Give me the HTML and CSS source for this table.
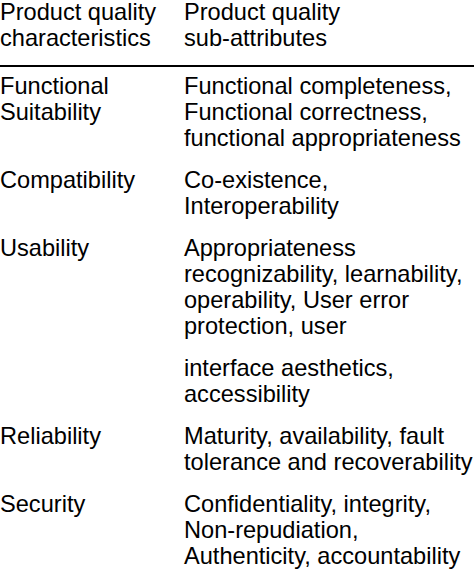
FILE: index.html
```html
<!DOCTYPE html>
<html>
<head>
<meta charset="utf-8">
<link rel="stylesheet" href="styles.css">
</head>
<body>
<div class="table">
  <div class="row head">
    <div class="cell">Product quality<br>characteristics</div>
    <div class="cell">Product quality<br>sub-attributes</div>
  </div>
  <div class="body">
    <div class="row">
      <div class="cell">Functional<br>Suitability</div>
      <div class="cell">Functional completeness,<br>Functional correctness,<br>functional appropriateness</div>
    </div>
    <div class="row">
      <div class="cell">Compatibility</div>
      <div class="cell">Co-existence,<br>Interoperability</div>
    </div>
    <div class="row">
      <div class="cell">Usability</div>
      <div class="cell">Appropriateness<br>recognizability, learnability,<br>operability, User error<br>protection, user</div>
    </div>
    <div class="row">
      <div class="cell"></div>
      <div class="cell">interface aesthetics,<br>accessibility</div>
    </div>
    <div class="row">
      <div class="cell">Reliability</div>
      <div class="cell">Maturity, availability, fault<br>tolerance and recoverability</div>
    </div>
    <div class="row">
      <div class="cell">Security</div>
      <div class="cell">Confidentiality, integrity,<br>Non-repudiation,<br>Authenticity, accountability</div>
    </div>
  </div>
</div>
</body>
</html>
```
FILE: styles.css
```css
html, body {
  margin: 0;
  padding: 0;
  background: #ffffff;
  overflow: hidden;
}
body {
  font-family: "Liberation Sans", Arial, sans-serif;
  font-size: 23.6px;
  line-height: 25.8px;
  color: #000;
  width: 474px;
  height: 573px;
}
.table {
  display: flex;
  flex-direction: column;
}
.row {
  display: grid;
  grid-template-columns: 184px 1fr;
}
.cell {
  white-space: nowrap;
}
.head {
  padding-bottom: 13.4px;
  border-bottom: 2px solid #000;
}
.body {
  padding-top: 7.5px;
  display: flex;
  flex-direction: column;
  gap: 16.5px;
}
```
